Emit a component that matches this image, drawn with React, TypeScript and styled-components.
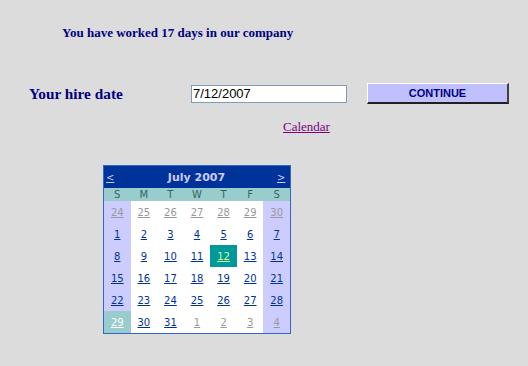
import React from "react";
import styled, { createGlobalStyle } from "styled-components";

const GlobalStyle = createGlobalStyle`
  html, body {
    margin: 0;
    padding: 0;
    background: #dcdcdc;
  }
  body {
    width: 528px;
    height: 366px;
    overflow: hidden;
    font-family: "Liberation Serif", "Times New Roman", serif;
  }
`;

const Page = styled.div`
  display: flex;
  flex-direction: column;
  padding-top: 25px;
`;

const Message = styled.div`
  margin-left: 62px;
  font: bold 13px/15px "Liberation Serif", "Times New Roman", serif;
  color: #000080;
`;

const FormRow = styled.div`
  display: flex;
  align-items: center;
  height: 21px;
  margin-top: 43px;
  padding-left: 29px;
`;

const Label = styled.div`
  width: 162px;
  font: bold 15.3px/18px "Liberation Serif", "Times New Roman", serif;
  color: #000080;
`;

const DateInput = styled.input`
  box-sizing: border-box;
  width: 156px;
  height: 18px;
  margin: 0;
  padding: 0 1px;
  border: 1px solid #7f9db9;
  background: #ffffff;
  font: 13px "Liberation Sans", Arial, sans-serif;
  color: #000000;
  outline: none;
`;

const ContinueButton = styled.button`
  box-sizing: border-box;
  width: 142px;
  height: 21px;
  margin: 0 0 0 20px;
  padding: 0;
  background: #c0c0ff;
  border: 2px solid;
  border-color: #ffffff #404040 #202020 #ffffff;
  border-top-width: 1px;
  border-left-width: 1px;
  font: bold 11px "Liberation Sans", Arial, sans-serif;
  color: #000080;
  cursor: pointer;
`;

const LinkRow = styled.div`
  margin-top: 15px;
  padding-left: 283px;
  font: 13px/15px "Liberation Serif", "Times New Roman", serif;
`;

const CalendarLink = styled.a`
  color: #800080;
  text-decoration: underline;
`;

const Calendar = styled.div`
  margin-top: 31px;
  margin-left: 103px;
  width: 186px;
  border: 1px solid #3366cc;
  background: #ffffff;
  font-family: "DejaVu Sans", Verdana, sans-serif;
  font-size: 10px;
`;

const CalHeader = styled.div`
  display: flex;
  align-items: center;
  justify-content: space-between;
  height: 22px;
  padding: 0 3px 0 2px;
  background: #003399;
  color: #ccccff;
`;

const NavLink = styled.a`
  color: #ccccff;
  font-size: 10px;
  text-decoration: underline;
  width: 10px;
`;

const MonthTitle = styled.div`
  font-weight: bold;
  font-size: 11px;
  color: #ccccff;
`;

const Grid = styled.div`
  display: grid;
  grid-template-columns: repeat(7, 1fr);
`;

const DayName = styled.div`
  height: 13px;
  line-height: 13px;
  text-align: center;
  background: #99cccc;
  color: #336666;
`;

type Variant = "normal" | "other" | "today" | "selected";

const Cell = styled.div<{ $weekend: boolean; $variant: Variant }>`
  height: 22px;
  display: flex;
  align-items: center;
  justify-content: center;
  background: ${(p) =>
    p.$variant === "selected"
      ? "#009999"
      : p.$variant === "today"
      ? "#99cccc"
      : p.$weekend
      ? "#ccccff"
      : "#ffffff"};
`;

const DayLink = styled.a<{ $variant: Variant }>`
  text-decoration: underline;
  color: ${(p) =>
    p.$variant === "selected"
      ? "#ccff99"
      : p.$variant === "today"
      ? "#ffffff"
      : p.$variant === "other"
      ? "#999999"
      : "#003399"};
`;

const dayNames = ["S", "M", "T", "W", "T", "F", "S"];

const days: { n: number; v: Variant }[] = [
  ...[24, 25, 26, 27, 28, 29, 30].map((n) => ({ n, v: "other" as Variant })),
  ...Array.from({ length: 28 }, (_, i) => ({
    n: i + 1,
    v: (i + 1 === 12 ? "selected" : "normal") as Variant,
  })),
  { n: 29, v: "today" },
  { n: 30, v: "normal" },
  { n: 31, v: "normal" },
  ...[1, 2, 3, 4].map((n) => ({ n, v: "other" as Variant })),
];

export default function App() {
  return (
    <>
      <GlobalStyle />
      <Page>
        <Message>You have worked 17 days in our company</Message>
        <FormRow>
          <Label>Your hire date</Label>
          <DateInput defaultValue="7/12/2007" />
          <ContinueButton>CONTINUE</ContinueButton>
        </FormRow>
        <LinkRow>
          <CalendarLink href="#">Calendar</CalendarLink>
        </LinkRow>
        <Calendar>
          <CalHeader>
            <NavLink href="#">&lt;</NavLink>
            <MonthTitle>July 2007</MonthTitle>
            <NavLink href="#">&gt;</NavLink>
          </CalHeader>
          <Grid>
            {dayNames.map((d, i) => (
              <DayName key={i}>{d}</DayName>
            ))}
            {days.map((d, i) => {
              const col = i % 7;
              return (
                <Cell key={i} $weekend={col === 0 || col === 6} $variant={d.v}>
                  <DayLink href="#" $variant={d.v}>
                    {d.n}
                  </DayLink>
                </Cell>
              );
            })}
          </Grid>
        </Calendar>
      </Page>
    </>
  );
}
